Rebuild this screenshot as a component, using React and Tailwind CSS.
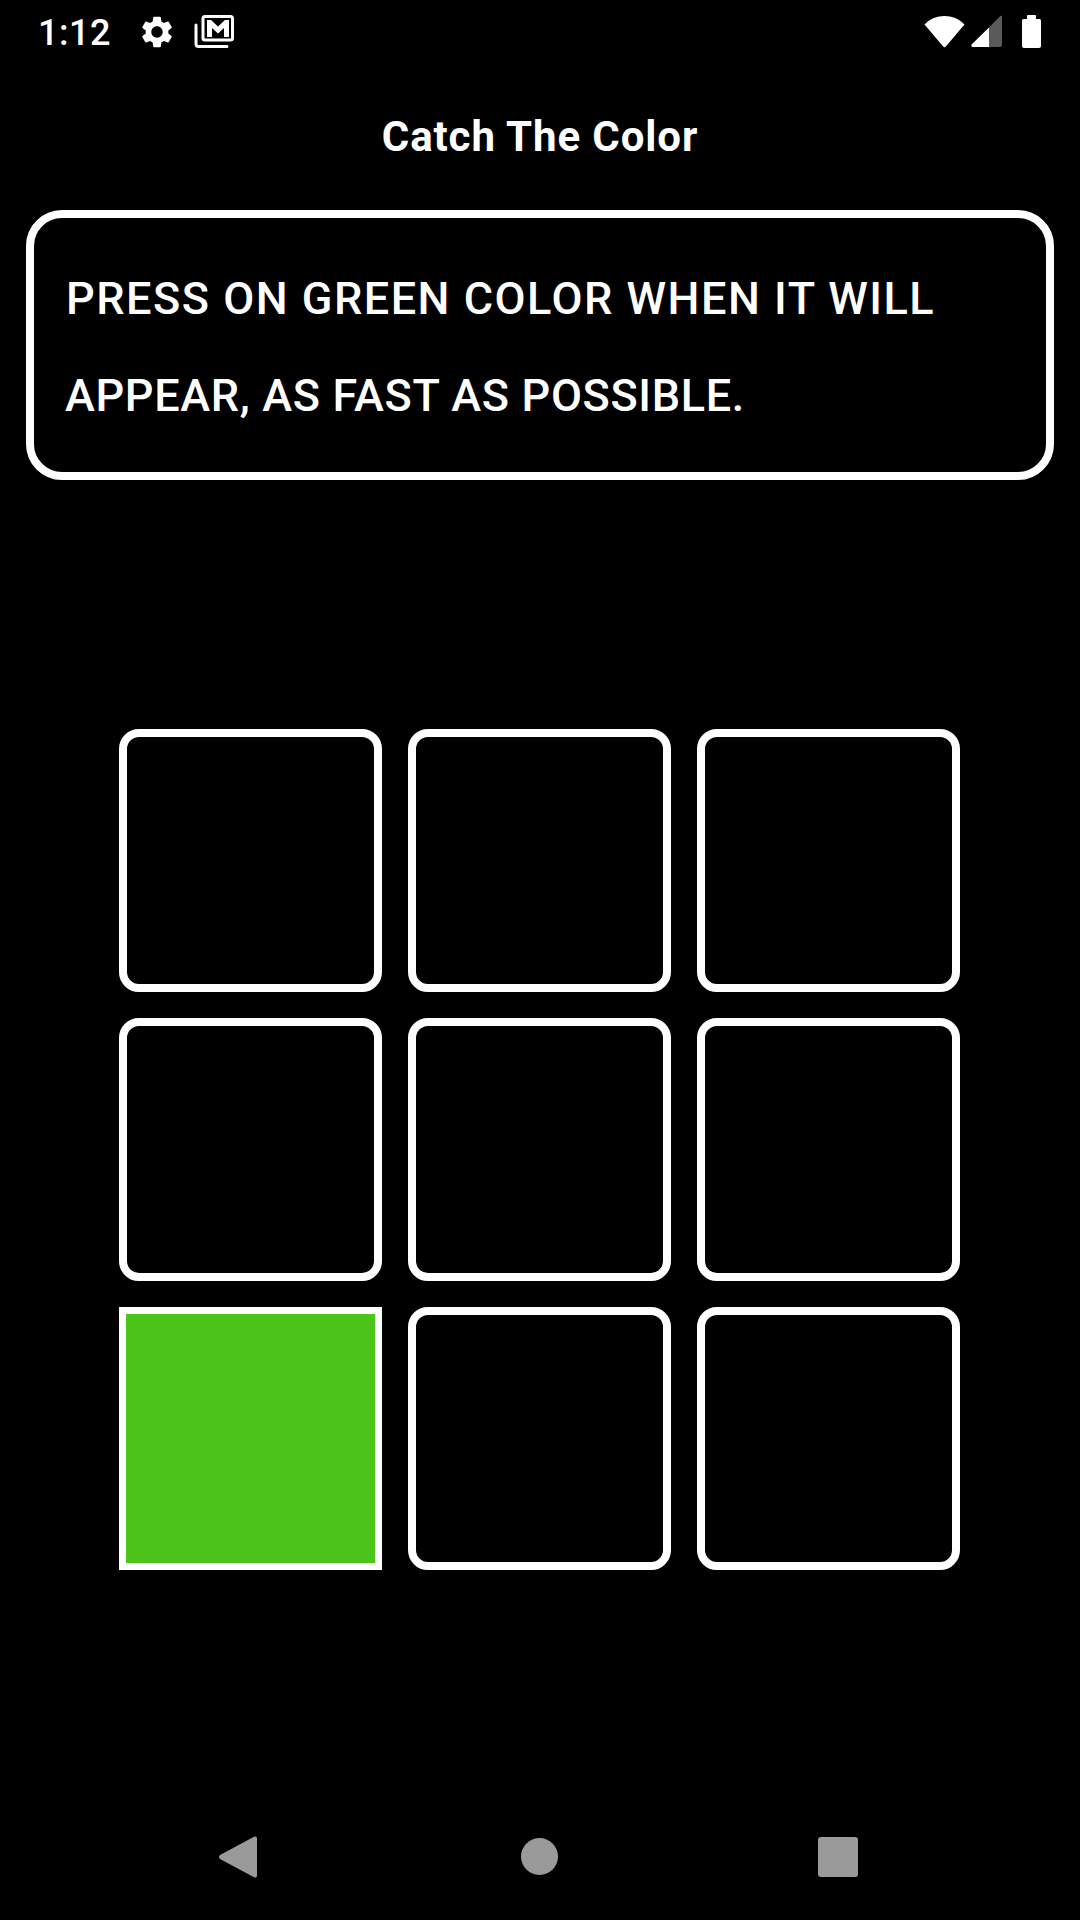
import { MdSettings } from "react-icons/md";

const FONT = "font-['Roboto',sans-serif]";

function MailIcon() {
  return (
    <svg width="40" height="33" viewBox="0 0 40 33" fill="none">
      <path d="M2 10v19a2.500 2.500 0 0 0 2.500 2.500H33" stroke="white" strokeWidth="3" strokeLinecap="round" />
      <rect x="9" y="1.500" width="29.500" height="23.500" rx="2" stroke="white" strokeWidth="3" />
      <path d="M13 5h4l7 6.500L31 5h4v17h-5V13l-6 5.500-6-5.500v9h-5z" fill="white" />
    </svg>
  );
}

function StatusIcons() {
  return (
    <div className="flex items-center">
      <svg width="41" height="33" viewBox="0 0 41 33" className="mr-[6px]">
        <path d="M0.500 9.500C6 3.800 13 1 20.500 1S35 3.800 40.500 9.500L21.800 31.500a1.700 1.700 0 0 1-2.600 0z" fill="white" />
      </svg>
      <svg width="31" height="33" viewBox="0 0 31 33" className="mr-[20px]">
        <path d="M18 12.500L29 1.200c.8-.8 2-.2 2 .8V30a2 2 0 0 1-2 2H18z" fill="#5a5a5a" />
        <path d="M18 12.500V32H2c-1.500 0-2.200-1.600-1.200-2.700z" fill="white" />
      </svg>
      <svg width="19" height="33" viewBox="0 0 19 33">
        <path d="M6 0h7a1 1 0 0 1 1 1v3h3.500A1.500 1.500 0 0 1 19 5.500V31a2 2 0 0 1-2 2H2a2 2 0 0 1-2-2V5.500A1.500 1.500 0 0 1 1.500 4H5V1a1 1 0 0 1 1-1z" fill="white" />
      </svg>
    </div>
  );
}

function Cell({ active }) {
  return (
    <div
      className={
        active
          ? "h-[263px] w-[263px] border-[7px] border-white bg-[#4bc51a]"
          : "h-[263px] w-[263px] rounded-[20px] border-[8px] border-white bg-black"
      }
    />
  );
}

export default function App() {
  const cells = [0, 1, 2, 3, 4, 5, 6, 7, 8];

  return (
    <div className={`flex h-[1920px] w-[1080px] flex-col bg-black text-white ${FONT}`}>
      <div className="flex h-[63px] items-center justify-between pl-[38px] pr-[39px]">
        <div className="flex items-center">
          <span className="mt-[3px] w-[101px] text-[36px] font-medium leading-none tracking-[0.500px]">1:12</span>
          <MdSettings className="ml-[-1px] mr-[18px] h-[38px] w-[38px] text-white" />
          <MailIcon />
        </div>
        <StatusIcons />
      </div>

      <h1 className="mt-[49px] text-center text-[42px] font-bold leading-[50px] tracking-[0.900px]">Catch The Color</h1>

      <div className="mx-[26px] mt-[48px] h-[270px] rounded-[36px] border-[8px] border-white pl-[32px] pt-[32px]">
        <p className="text-[45px] font-medium leading-[97px]">
          <span className="tracking-[1.500px]">PRESS ON GREEN COLOR WHEN IT WILL</span>
          <br />
          <span className="ml-[-1px] tracking-[0.650px]">APPEAR, AS FAST AS POSSIBLE.</span>
        </p>
      </div>

      <div className="ml-[119px] mt-[249px] grid w-[841px] grid-cols-3 gap-[26px]">
        {cells.map((c) => (
          <Cell key={c} active={c === 6} />
        ))}
      </div>

      <div className="mt-auto flex h-[85px] items-start pt-[1px]">
        <div className="ml-[219px] h-[42px] w-[38px]">
          <svg width="38" height="42" viewBox="0 0 38 42">
            <path d="M35.500 0.500a2 2 0 0 1 2.500 2V39.500a2 2 0 0 1-2.500 2L1 23a2.500 2.500 0 0 1 0-4z" fill="#9a9a9a" />
          </svg>
        </div>
        <div className="ml-[264px] mt-[2px] h-[37px] w-[37px] rounded-full bg-[#9a9a9a]" />
        <div className="ml-[260px] mt-[1px] h-[40px] w-[40px] rounded-[3px] bg-[#9a9a9a]" />
      </div>
    </div>
  );
}
